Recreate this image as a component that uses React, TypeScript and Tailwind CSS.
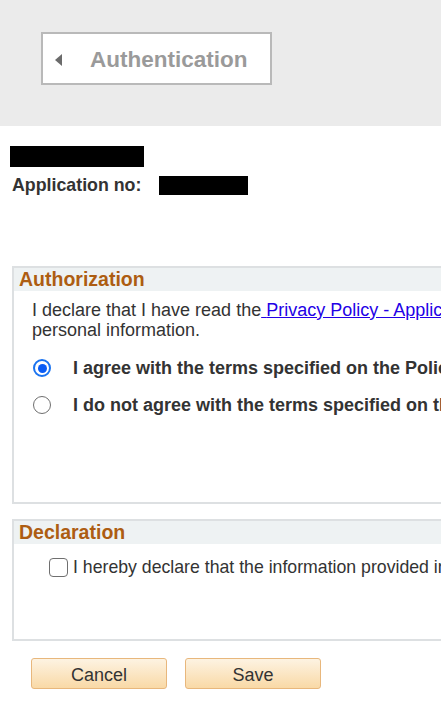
import React from "react";

export default function App() {
  return (
    <div
      className="w-[441px] h-[714px] overflow-hidden bg-white relative"
      style={{ fontFamily: '"Liberation Sans", Arial, Helvetica, sans-serif' }}
    >
      {/* Header */}
      <div className="h-[126px] bg-[#ebebeb] pt-[32px] pl-[41px]">
        <div className="w-[231px] h-[53px] border-2 border-[#b9b9b9] bg-white flex items-center pt-[3px]">
          <svg width="8" height="12" viewBox="0 0 8 12" className="ml-[12px]">
            <polygon points="7,0 7,12 0,6" fill="#6b6b6b" />
          </svg>
          <span className="ml-[27px] text-[22.5px] font-bold text-[#9a9a9a] leading-none">
            Authentication
          </span>
        </div>
      </div>

      {/* Applicant info */}
      <div className="pt-[20px] pl-[10px]">
        <div className="w-[134px] h-[21px] bg-black" />
        <div className="flex items-center mt-[8px] h-[21px]">
          <span className="ml-[2px] text-[17.8px] font-bold text-[#333] leading-none">
            Application no:
          </span>
          <div className="ml-[18px] w-[89px] h-[19px] bg-black" />
        </div>
      </div>

      {/* Authorization panel */}
      <div className="ml-[12px] mt-[70px] w-[700px] h-[238px] border-2 border-[#dde0e2] whitespace-nowrap">
        <div className="h-[23px] bg-[#eef2f3] pl-[5px] flex items-center">
          <span className="text-[19.5px] font-bold text-[#ad5d12] leading-none">Authorization</span>
        </div>
        <div className="pl-[18px] pt-[9px] text-[18px] leading-[20px] text-[#333]">
          <div>
            I declare that I have read the
            <span className="text-[#2200e6] underline">{"\u00a0"}Privacy Policy - Applicant Information</span>{" "}
            and consent to the collection of my
          </div>
          <div>personal information.</div>
        </div>
        <div className="mt-[18px] flex flex-col gap-[17px] text-[18px] font-bold text-[#333]">
          <div className="flex items-center h-[20px]">
            <div className="ml-[19px] w-[18px] h-[18px] rounded-full border-[2px] border-[#1a73f0] flex items-center justify-center bg-white">
              <div className="w-[9px] h-[9px] rounded-full bg-[#0a5cf5]" />
            </div>
            <span className="ml-[22px] leading-none">I agree with the terms specified on the Policy</span>
          </div>
          <div className="flex items-center h-[20px]">
            <div className="ml-[19px] w-[18px] h-[18px] rounded-full border-[1.5px] border-[#6f6f6f] bg-white" />
            <span className="ml-[22px] leading-none">I do not agree with the terms specified on the Policy</span>
          </div>
        </div>
      </div>

      {/* Declaration panel */}
      <div className="ml-[12px] mt-[15px] w-[700px] h-[122px] border-2 border-[#dde0e2] whitespace-nowrap">
        <div className="h-[23px] bg-[#eef2f3] pl-[5px] flex items-center">
          <span className="text-[19.5px] font-bold text-[#ad5d12] leading-none">Declaration</span>
        </div>
        <div className="mt-[13px] flex items-center h-[20px]">
          <div className="ml-[35px] w-[19px] h-[19px] rounded-[4px] border-[1.5px] border-[#6f6f6f] bg-white" />
          <span className="ml-[5px] text-[17.7px] text-[#333] leading-none pt-[2px]">
            I hereby declare that the information provided in this application is true
          </span>
        </div>
      </div>

      {/* Buttons */}
      <div className="flex gap-[18px] pl-[31px] mt-[17px]">
        <button className="w-[136px] h-[31px] rounded-[3px] border border-[#e8b77c] bg-gradient-to-b from-[#fdf3e2] to-[#f9d9a6] text-[18px] text-[#333] leading-none pt-[2px]">
          Cancel
        </button>
        <button className="w-[136px] h-[31px] rounded-[3px] border border-[#e8b77c] bg-gradient-to-b from-[#fdf3e2] to-[#f9d9a6] text-[18px] text-[#333] leading-none pt-[2px]">
          Save
        </button>
      </div>
    </div>
  );
}
